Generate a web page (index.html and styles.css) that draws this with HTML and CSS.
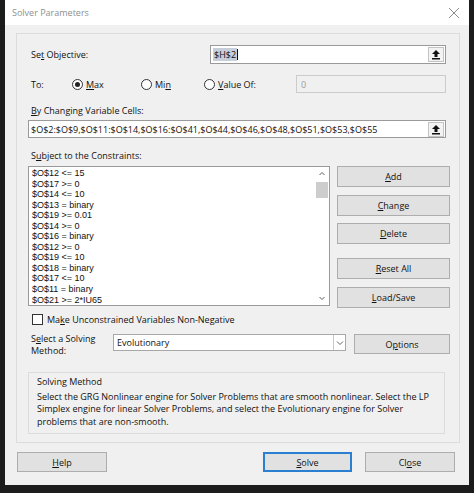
FILE: index.html
```html
<!DOCTYPE html>
<html>
<head>
<meta charset="utf-8">
<title>Solver Parameters</title>
<link rel="stylesheet" href="styles.css">
</head>
<body>
<div class="dialog">
  <div class="titlebar">
    <span class="title">Solver Parameters</span>
    <svg class="close" width="12" height="12" viewBox="0 0 12 12"><path d="M1 1 L11 11 M11 1 L1 11" stroke="#8a8a8a" stroke-width="1" fill="none"/></svg>
  </div>
  <div class="group">
    <div class="row r-objective">
      <span class="lbl w-obj">Se<u>t</u> Objective:</span>
      <div class="input objective">
        <span class="txt"><span class="sel">$H$2</span><span class="caret"></span></span>
        <span class="refbtn"><svg width="10" height="11" viewBox="0 0 10 11"><path d="M5 1 L9 5 L6.5 5 L6.5 8 L3.5 8 L3.5 5 L1 5 Z" fill="#111"/><rect x="1" y="9" width="8" height="1.5" fill="#111"/></svg></span>
      </div>
    </div>
    <div class="row r-to">
      <span class="lbl w-to">To:</span>
      <span class="radio w-max"><span class="circle on"></span><span><u>M</u>ax</span></span>
      <span class="radio w-min"><span class="circle"></span><span>Mi<u>n</u></span></span>
      <span class="radio w-val"><span class="circle"></span><span><u>V</u>alue Of:</span></span>
      <div class="input value">0</div>
    </div>
    <div class="lbl caption c-cells"><u>B</u>y Changing Variable Cells:</div>
    <div class="input cells">
      <span class="txt">$O$2:$O$9,$O$11:$O$14,$O$16:$O$41,$O$44,$O$46,$O$48,$O$51,$O$53,$O$55</span>
      <span class="refbtn"><svg width="10" height="11" viewBox="0 0 10 11"><path d="M5 1 L9 5 L6.5 5 L6.5 8 L3.5 8 L3.5 5 L1 5 Z" fill="#111"/><rect x="1" y="9" width="8" height="1.5" fill="#111"/></svg></span>
    </div>
    <div class="lbl caption c-subj">S<u>u</u>bject to the Constraints:</div>
    <div class="constraints">
      <div class="list">
        <div class="items">
          <div>$O$12 &lt;= 15</div>
          <div>$O$17 &gt;= 0</div>
          <div>$O$14 &lt;= 10</div>
          <div>$O$13 = binary</div>
          <div>$O$19 &gt;= 0.01</div>
          <div>$O$14 &gt;= 0</div>
          <div>$O$16 = binary</div>
          <div>$O$12 &gt;= 0</div>
          <div>$O$19 &lt;= 10</div>
          <div>$O$18 = binary</div>
          <div>$O$17 &lt;= 10</div>
          <div>$O$11 = binary</div>
          <div>$O$21 &gt;= 2*IU65</div>
        </div>
        <div class="scrollbar">
          <svg class="sarrow" width="14" height="14" viewBox="0 0 14 14"><path d="M4.5 8 L7 5.5 L9.5 8" stroke="#606060" stroke-width="1" fill="none"/></svg>
          <div class="track"><div class="thumb"></div></div>
          <svg class="sarrow" width="14" height="14" viewBox="0 0 14 14"><path d="M4.5 6 L7 8.5 L9.5 6" stroke="#606060" stroke-width="1" fill="none"/></svg>
        </div>
      </div>
      <div class="btncol">
        <button class="btn b-add"><u>A</u>dd</button>
        <button class="btn b-change"><u>C</u>hange</button>
        <button class="btn b-delete"><u>D</u>elete</button>
        <button class="btn b-reset"><u>R</u>eset All</button>
        <button class="btn b-load"><u>L</u>oad/Save</button>
      </div>
    </div>
    <div class="check"><span class="box"></span><span>Ma<u>k</u>e Unconstrained Variables Non-Negative</span></div>
    <div class="row r-method">
      <span class="lbl w-method">S<u>e</u>lect a Solving<br>Method:</span>
      <div class="select">
        <span class="txt">Evolutionary</span>
        <span class="drop"><svg width="8" height="6" viewBox="0 0 8 6"><path d="M1 1.5 L4 4.5 L7 1.5" stroke="#666" stroke-width="1" fill="none"/></svg></span>
      </div>
      <button class="btn b-options">O<u>p</u>tions</button>
    </div>
    <div class="info">
      <div class="info-title">Solving Method</div>
      <p class="info-text">Select the GRG Nonlinear engine for Solver Problems that are smooth nonlinear. Select the LP Simplex engine for linear Solver Problems, and select the Evolutionary engine for Solver problems that are non-smooth.</p>
    </div>
  </div>
  <div class="footer">
    <button class="btn b-help"><u>H</u>elp</button>
    <span class="spacer"></span>
    <button class="btn b-solve"><u>S</u>olve</button>
    <button class="btn b-close">Cl<u>o</u>se</button>
  </div>
</div>
</body>
</html>
```

FILE: styles.css
```css
html, body {
  margin: 0;
  padding: 0;
}
body {
  width: 474px;
  height: 493px;
  background: #1c1c1c;
  font-family: "Open Sans", "Noto Sans", sans-serif;
  font-size: 9px;
  color: #111;
  overflow: hidden;
}
u { text-decoration: underline; text-underline-offset: 1px; }

.dialog {
  margin-left: 5px;
  width: 464px;
  height: 485px;
  background: #f0f0f0;
  display: flex;
  flex-direction: column;
}
.titlebar {
  height: 25px;
  background: #ffffff;
  display: flex;
  align-items: center;
  padding: 0 9px 0 7px;
  flex: none;
}
.title {
  flex: 1;
  color: #8f8f8f;
  font-size: 9px;
}
.close { display: block; }

.group {
  margin: 8px 0 0 11px;
  width: 422px;
  padding: 11px 9px 9px 11px;
  border: 1px solid #dcdcdc;
  height: 388px;
  flex: none;
}
.row {
  display: flex;
  align-items: center;
}
.lbl { padding-left: 3px; box-sizing: border-box; flex: none; }
.w-obj { width: 182px; }
.w-to { width: 44px; }

.input {
  background: #fff;
  border: 1px solid #9a9a9a;
  box-sizing: border-box;
  display: flex;
  align-items: center;
  padding-left: 2px;
}
.input .txt { flex: 1; white-space: nowrap; overflow: hidden; }
.objective { width: 236px; height: 19px; padding-right: 1px; }
.sel { background: #c6cfd9; padding: 0 1px; }
.caret {
  display: inline-block;
  width: 1px;
  height: 11px;
  background: #111;
  vertical-align: -2px;
}
.refbtn {
  width: 16px;
  height: 15px;
  border: 1px solid #c4c4c4;
  background: #f3f3f3;
  box-sizing: border-box;
  display: flex;
  align-items: center;
  justify-content: center;
  flex: none;
}
.r-objective { height: 19px; }

.r-to { margin-top: 11px; height: 18px; }
.radio {
  display: flex;
  align-items: center;
  gap: 3px;
  flex: none;
}
.w-max { width: 69px; }
.w-min { width: 63px; }
.w-val { width: 92px; }
.circle {
  width: 11px;
  height: 11px;
  border: 1px solid #333;
  border-radius: 50%;
  box-sizing: border-box;
  background: #fff;
  position: relative;
}
.circle.on::after {
  content: "";
  position: absolute;
  left: 2px;
  top: 2px;
  width: 5px;
  height: 5px;
  border-radius: 50%;
  background: #222;
}
.value {
  width: 150px;
  height: 18px;
  background: #f0f0f0;
  border-color: #cccccc;
  color: #9a9a9a;
  padding-left: 4px;
}

.caption { height: 14px; line-height: 14px; }
.c-cells { margin-top: 11px; }
.cells { margin-top: 2px; width: 418px; height: 18px; padding-right: 1px; }
.c-subj { margin-top: 11px; }

.constraints {
  margin-top: 3px;
  display: flex;
  gap: 7px;
}
.list {
  width: 302px;
  height: 140px;
  background: #fff;
  border: 1px solid #9a9a9a;
  box-sizing: border-box;
  display: flex;
}
.items {
  flex: 1;
  padding: 1px 0 0 3px;
  font-family: "Liberation Sans", Arial, sans-serif;
  font-size: 9px;
  line-height: 10.55px;
  white-space: nowrap;
  overflow: hidden;
}
.scrollbar {
  width: 14px;
  display: flex;
  flex-direction: column;
  background: #fff;
}
.sarrow { display: block; flex: none; }
.track { flex: 1; }
.thumb {
  margin: 1px 1px 0 1px;
  height: 16px;
  background: #cdcdcd;
}

.btncol {
  width: 113px;
  display: flex;
  flex-direction: column;
}
.btn {
  font-family: inherit;
  font-size: 9px;
  color: #111;
  background: #e1e1e1;
  border: 1px solid #adadad;
  box-sizing: border-box;
  padding: 0;
  height: 21px;
  display: flex;
  align-items: center;
  justify-content: center;
}
.b-change { margin-top: 8px; }
.b-delete { margin-top: 7px; }
.b-reset { margin-top: 14px; }
.b-load { margin-top: 8px; }

.check {
  margin-top: 4px;
  height: 14px;
  display: flex;
  align-items: center;
  gap: 4px;
  padding-left: 4px;
}
.box {
  width: 11px;
  height: 11px;
  border: 1px solid #333;
  background: #fff;
  box-sizing: border-box;
}

.r-method { margin-top: 8px; height: 20px; align-items: flex-start; }
.w-method { width: 85px; line-height: 12.4px; margin-top: -1px; }
.select {
  width: 233px;
  height: 17px;
  background: #fff;
  border: 1px solid #a8a8a8;
  box-sizing: border-box;
  display: flex;
  align-items: center;
  padding-left: 3px;
}
.select .txt { flex: 1; }
.drop {
  width: 11px;
  height: 15px;
  border-left: 1px solid #c8c8c8;
  display: flex;
  align-items: center;
  justify-content: center;
}
.b-options { width: 96px; height: 20px; margin-left: 8px; }

.info {
  margin-top: 18px;
  width: 417px;
  height: 62px;
  border: 1px solid #dcdcdc;
  box-sizing: border-box;
  padding: 2px 8px 0 8px;
}
.info-title { line-height: 13px; }
.info-text { margin: 3px 0 0 0; line-height: 12.4px; }

.footer {
  margin-top: 9px;
  display: flex;
  padding: 0 14px 0 12px;
}
.spacer { flex: 1; }
.b-help { width: 90px; height: 20px; }
.b-solve { width: 89px; height: 20px; border: 2px solid #2b7fd0; }
.b-close { width: 90px; height: 20px; margin-left: 13px; }
```
